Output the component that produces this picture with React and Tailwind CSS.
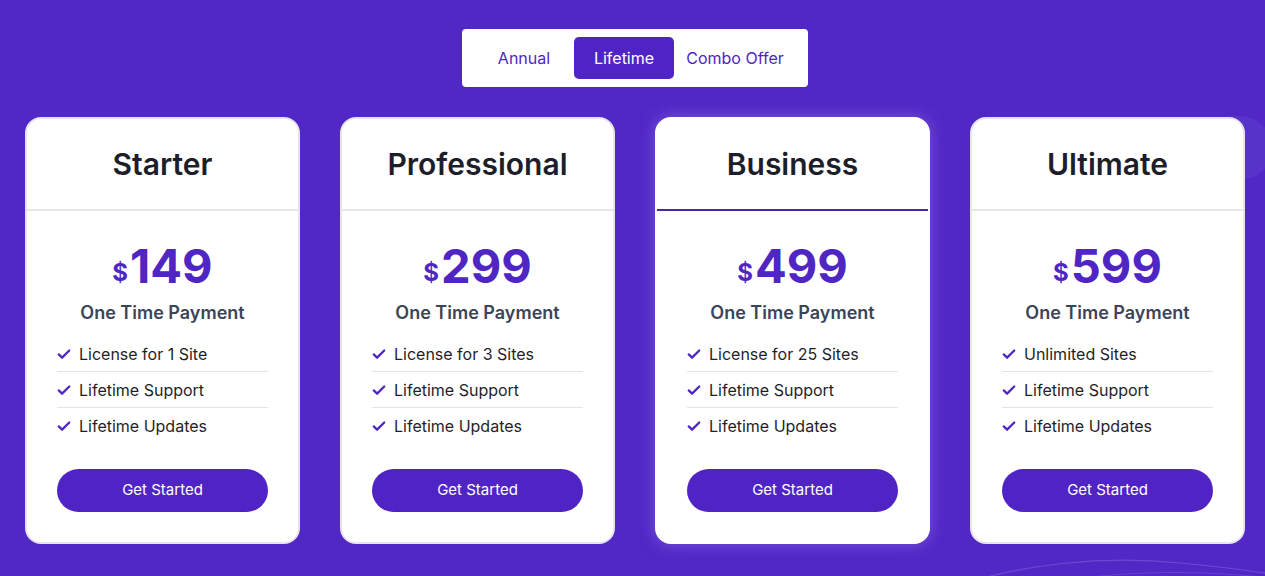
import React from 'react';

const plans = [
  { name: 'Starter', price: '149', sites: 'License for 1 Site' },
  { name: 'Professional', price: '299', sites: 'License for 3 Sites' },
  { name: 'Business', price: '499', sites: 'License for 25 Sites', featured: true },
  { name: 'Ultimate', price: '599', sites: 'Unlimited Sites' },
];

function Check() {
  return (
    <svg className="w-[14px] h-[14px] shrink-0" viewBox="0 0 16 16" fill="none">
      <path d="M2 8.5l3.8 3.7L14 4" stroke="#4f26c4" strokeWidth="2.6" strokeLinecap="round" strokeLinejoin="round" />
    </svg>
  );
}

function PlanCard({ plan }) {
  const features = [plan.sites, 'Lifetime Support', 'Lifetime Updates'];
  return (
    <div
      className={`w-[275px] h-[427px] bg-white rounded-[16px] flex flex-col overflow-hidden border-2 ${
        plan.featured ? 'border-white shadow-[0_0_16px_rgba(150,120,235,0.6)]' : 'border-[#e6e4ee]'
      }`}
    >
      <div className={`h-[92px] shrink-0 flex items-center justify-center border-b-2 ${plan.featured ? 'border-[#4a28aa]' : 'border-[#e5e7eb]'}`}>
        <h3 className="text-[30px] font-semibold text-[#1e1e2a]">{plan.name}</h3>
      </div>
      <div className="flex-1 flex flex-col px-[30px] pt-[31px]">
        <div className="flex items-end justify-center text-[#4f26c4] font-bold leading-none">
          <span className="text-[24px] mb-[4px] mr-[2px]">$</span>
          <span className="text-[47px]">{plan.price}</span>
        </div>
        <p className="mt-[10px] text-center text-[18px] font-semibold text-[#3a4558]">One Time Payment</p>
        <ul className="mt-[10px]">
          {features.map((f, i) => (
            <li
              key={f}
              className={`h-[36px] flex items-center gap-[8px] text-[16px] text-[#1f1f2a] ${i < 2 ? 'border-b border-[#e3e3e8]' : ''}`}
            >
              <Check />
              {f}
            </li>
          ))}
        </ul>
        <button className="mt-[25px] h-[43px] w-full rounded-full bg-[#5024c4] text-white text-[15px]">
          Get Started
        </button>
      </div>
    </div>
  );
}

export default function App() {
  return (
    <div
      className="relative w-[1265px] h-[576px] bg-[#5127c6] overflow-hidden"
      style={{ fontFamily: 'Inter, "Noto Sans", sans-serif' }}
    >
      {/* decorative shapes */}
      <div className="absolute left-[1200px] top-[116px] w-[72px] h-[64px] rounded-full bg-[#5833c9]" />
      <svg className="absolute left-[960px] top-[555px]" width="320" height="30" viewBox="0 0 320 30" fill="none">
        <path d="M0 30 C60 10 140 0 220 8 S300 18 320 20" stroke="#6a4bd2" strokeWidth="1.2" />
        <path d="M80 30 C140 18 220 12 320 24" stroke="#5f42ce" strokeWidth="1" />
      </svg>

      <div className="relative flex flex-col items-center pt-[29px]">
        <div className="flex items-center h-[58px] w-[346px] bg-white rounded-[4px] px-[8px] ml-[5px]">
          <button className="w-[104px] h-[42px] text-[16px] text-[#4f26c4] pl-[4px]">Annual</button>
          <button className="w-[100px] h-[42px] rounded-[5px] bg-[#5024c4] text-white text-[16px]">Lifetime</button>
          <button className="flex-1 h-[42px] text-[16px] text-[#4f26c4] pr-[4px]">Combo Offer</button>
        </div>
        <div className="flex gap-[40px] mt-[30px] pl-[5px]">
          {plans.map((p) => (
            <PlanCard key={p.name} plan={p} />
          ))}
        </div>
      </div>
    </div>
  );
}
